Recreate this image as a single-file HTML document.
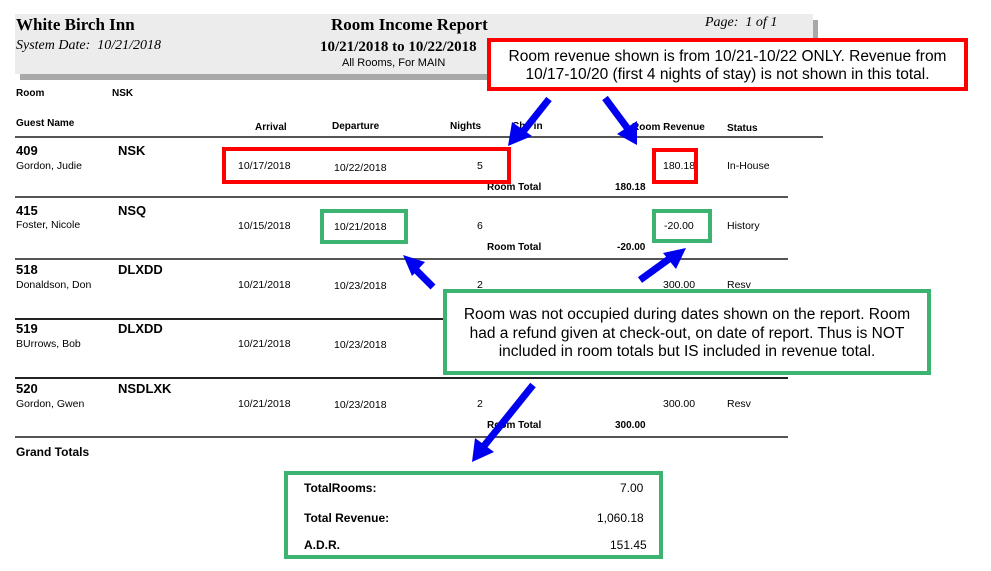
<!DOCTYPE html>
<html><head><meta charset="utf-8"><style>
body{margin:0;width:991px;height:571px;background:#fff;position:relative;overflow:hidden;font-family:"Liberation Sans",Arial,sans-serif;color:#000}
.a{position:absolute;white-space:nowrap}
.s{font-family:"Liberation Serif",serif}
.h{font-size:10px;font-weight:bold}
.t{font-size:10.5px}
.b{font-size:13px;font-weight:bold}
.ln{position:absolute;height:1.5px;background:#555}
.box{position:absolute;box-sizing:border-box}
</style></head><body>
<div class="box" style="left:20px;top:20px;width:798px;height:60px;background:#a8a8a8"></div>
<div class="box" style="left:15px;top:14px;width:798px;height:60px;background:#ececec"></div>
<div class="a s" style="left:16px;top:15px;font-size:17px;font-weight:bold">White Birch Inn</div>
<div class="a s" style="left:16px;top:38px;font-size:14px;font-style:italic">System Date:&nbsp; 10/21/2018</div>
<div class="a s" style="left:331px;top:15px;font-size:17px;font-weight:bold">Room Income Report</div>
<div class="a s" style="left:320px;top:39px;font-size:15px;font-weight:bold">10/21/2018 to 10/22/2018</div>
<div class="a" style="left:342px;top:57px;font-size:11px">All Rooms, For MAIN</div>
<div class="a s" style="left:705px;top:15px;font-size:14px;font-style:italic">Page:&nbsp; 1 of 1</div>

<div class="a h" style="left:16px;top:88px">Room</div>
<div class="a h" style="left:112px;top:88px">NSK</div>
<div class="a h" style="left:16px;top:118px">Guest Name</div>
<div class="a h" style="left:255px;top:122px">Arrival</div>
<div class="a h" style="left:332px;top:121px">Departure</div>
<div class="a h" style="left:450px;top:121px">Nights</div>
<div class="a h" style="left:512px;top:121px">Ch&nbsp;&nbsp;&nbsp;in</div>
<div class="a h" style="left:632px;top:122px">Room Revenue</div>
<div class="a h" style="left:727px;top:123px">Status</div>
<div class="ln" style="left:15px;top:136px;width:808px"></div>

<!-- rows -->
<div class="a b" style="left:16px;top:143px">409</div><div class="a b" style="left:118px;top:143px">NSK</div>
<div class="a t" style="left:16px;top:160px">Gordon, Judie</div>
<div class="a t" style="left:238px;top:160px">10/17/2018</div><div class="a t" style="left:334px;top:162px">10/22/2018</div>
<div class="a t" style="left:477px;top:160px">5</div><div class="a t" style="left:663px;top:160px">180.18</div><div class="a t" style="left:727px;top:160px">In-House</div>
<div class="a h" style="left:487px;top:182px">Room Total</div><div class="a h" style="left:615px;top:182px">180.18</div>
<div class="ln" style="left:15px;top:196px;width:773px"></div>

<div class="a b" style="left:16px;top:203px">415</div><div class="a b" style="left:118px;top:203px">NSQ</div>
<div class="a t" style="left:16px;top:219px">Foster, Nicole</div>
<div class="a t" style="left:238px;top:220px">10/15/2018</div><div class="a t" style="left:334px;top:221px">10/21/2018</div>
<div class="a t" style="left:477px;top:220px">6</div><div class="a t" style="left:664px;top:220px">-20.00</div><div class="a t" style="left:727px;top:220px">History</div>
<div class="a h" style="left:487px;top:242px">Room Total</div><div class="a h" style="left:617px;top:242px">-20.00</div>
<div class="ln" style="left:15px;top:258px;width:773px"></div>

<div class="a b" style="left:16px;top:262px">518</div><div class="a b" style="left:118px;top:262px">DLXDD</div>
<div class="a t" style="left:16px;top:279px">Donaldson, Don</div>
<div class="a t" style="left:238px;top:279px">10/21/2018</div><div class="a t" style="left:334px;top:280px">10/23/2018</div>
<div class="a t" style="left:477px;top:279px">2</div><div class="a t" style="left:663px;top:279px">300.00</div><div class="a t" style="left:727px;top:279px">Resv</div>
<div class="ln" style="left:15px;top:318px;width:773px;background:#222"></div>

<div class="a b" style="left:16px;top:321px">519</div><div class="a b" style="left:118px;top:321px">DLXDD</div>
<div class="a t" style="left:16px;top:338px">BUrrows, Bob</div>
<div class="a t" style="left:238px;top:338px">10/21/2018</div><div class="a t" style="left:334px;top:339px">10/23/2018</div>
<div class="ln" style="left:15px;top:377px;width:773px;background:#222"></div>

<div class="a b" style="left:16px;top:381px">520</div><div class="a b" style="left:118px;top:381px">NSDLXK</div>
<div class="a t" style="left:16px;top:398px">Gordon, Gwen</div>
<div class="a t" style="left:238px;top:398px">10/21/2018</div><div class="a t" style="left:334px;top:399px">10/23/2018</div>
<div class="a t" style="left:477px;top:398px">2</div><div class="a t" style="left:663px;top:398px">300.00</div><div class="a t" style="left:727px;top:398px">Resv</div>
<div class="a h" style="left:487px;top:420px">Room Total</div><div class="a h" style="left:615px;top:420px">300.00</div>
<div class="ln" style="left:15px;top:436px;width:773px"></div>

<div class="a" style="left:16px;top:445px;font-size:12px;font-weight:bold">Grand Totals</div>

<!-- annotation boxes -->
<div class="box" style="left:222px;top:147px;width:289px;height:37px;border:4px solid #f00"></div>
<div class="box" style="left:652px;top:148px;width:46px;height:36px;border:4px solid #f00"></div>
<div class="box" style="left:320px;top:209px;width:88px;height:35px;border:4px solid #3cb371"></div>
<div class="box" style="left:652px;top:209px;width:60px;height:34px;border:4px solid #3cb371"></div>

<div class="box" style="left:487px;top:38px;width:481px;height:53px;border:4px solid #f00;background:#fff;font-size:15.5px;text-align:center;line-height:18px;padding-top:6px">Room revenue shown is from 10/21-10/22 ONLY. Revenue from<br>10/17-10/20 (first 4 nights of stay) is not shown in this total.</div>

<div class="box" style="left:443px;top:289px;width:488px;height:86px;border:4px solid #3cb371;background:#fff;font-size:15.5px;text-align:center;line-height:18.5px;padding-top:13px">Room was not occupied during dates shown on the report. Room<br>had a refund given at check-out, on date of report. Thus is NOT<br>included in room totals but IS included in revenue total.</div>

<div class="box" style="left:284px;top:471px;width:379px;height:88px;border:4px solid #3cb371;background:#fff"></div>
<div class="a" style="left:304px;top:481px;font-size:12px;font-weight:bold">TotalRooms:</div><div class="a" style="left:620px;top:481px;font-size:12px">7.00</div>
<div class="a" style="left:304px;top:511px;font-size:12px;font-weight:bold">Total Revenue:</div><div class="a" style="left:597px;top:511px;font-size:12px">1,060.18</div>
<div class="a" style="left:304px;top:538px;font-size:12px;font-weight:bold">A.D.R.</div><div class="a" style="left:610px;top:538px;font-size:12px">151.45</div>

<svg width="991" height="571" style="position:absolute;left:0;top:0" fill="#0000f0" stroke="#0000f0">
<line x1="549" y1="99" x2="522" y2="133" stroke-width="7"/><polygon points="508,146 512,122 532,136" stroke="none"/>
<line x1="605" y1="98" x2="628" y2="129" stroke-width="7"/><polygon points="637,145 617,134 637,121" stroke="none"/>
<line x1="433" y1="287" x2="413" y2="267" stroke-width="7"/><polygon points="403,255 425,262 412,276" stroke="none"/>
<line x1="640" y1="280" x2="669" y2="259" stroke-width="7"/><polygon points="686,248 676,269 663,253" stroke="none"/>
<line x1="533" y1="385" x2="484" y2="446" stroke-width="7"/><polygon points="472,462 475,438 494,452" stroke="none"/>
</svg>
</body></html>
